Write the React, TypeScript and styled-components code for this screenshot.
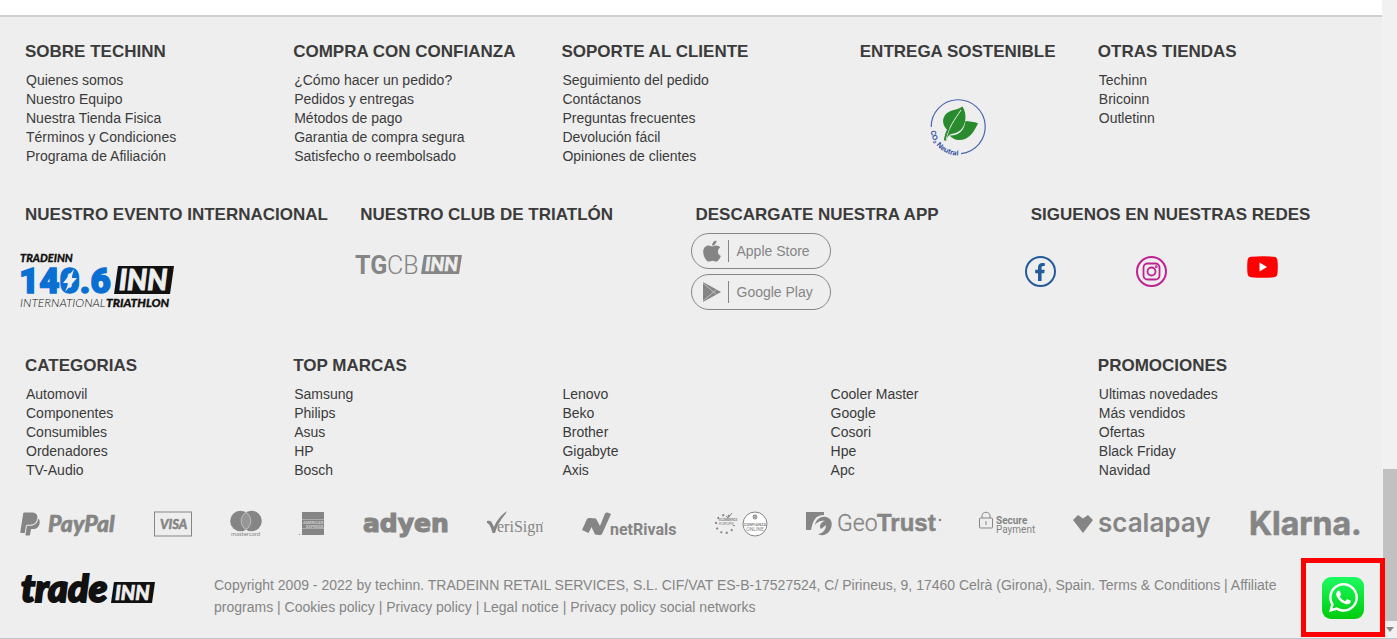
import React from 'react';
import styled, { createGlobalStyle } from 'styled-components';
import { FaApple, FaFacebookF, FaPaypal, FaWhatsapp } from 'react-icons/fa';

const GlobalStyle = createGlobalStyle`
  * { box-sizing: border-box; }
  body {
    margin: 0;
    background: #fff;
    font-family: "Liberation Sans", Arial, sans-serif;
    color: #3b3b3b;
  }
  a { color: inherit; text-decoration: none; }
  ul { list-style: none; margin: 0; padding: 0; }
  svg { display: block; overflow: visible; }
`;

const GRAY = '#858585';

const Shell = styled.div`
  display: flex;
  min-height: 100vh;
  border-bottom: 1px solid #c4c4c8;
`;

const Page = styled.main`
  display: flex;
  flex-direction: column;
  flex: 1;
  min-width: 0;
  padding-top: 15px;
`;

const ScrollTrack = styled.div`
  display: flex;
  flex-direction: column;
  justify-content: flex-end;
  align-items: center;
  width: 15px;
  background: #f1f1f1;
`;

const ScrollThumb = styled.div`
  width: 14px;
  height: 152px;
  background: #c1c1c1;
`;

const ScrollArrow = styled.div`
  margin: 6px 0;
  border: 4px solid transparent;
  border-top: 5px solid #8a8a8a;
  border-bottom: 0;
`;

const Footer = styled.footer`
  flex: 1;
  border-top: 2px solid #cfcfcf;
  background: #eee;
  padding: 25px 0 20px;
`;

const Row = styled.div<{ $columns: number; $gap: number }>`
  display: grid;
  grid-template-columns: repeat(${(p) => p.$columns}, minmax(0, 1fr));
  padding: 0 16px 0 25px;
  margin-bottom: ${(p) => p.$gap}px;
`;

const Column = styled.section<{ $centered?: boolean }>`
  ${(p) =>
    p.$centered &&
    `display: flex; flex-direction: column; align-items: center; padding-right: 12px;`}
`;

const Heading = styled.h2`
  margin: 0;
  height: 20px;
  font-size: 17px;
  line-height: 20px;
  font-weight: 700;
  white-space: nowrap;
`;

const LinkList = styled.ul`
  padding: 9px 0 0 1px;
  font-size: 14px;
  line-height: 19px;
`;

const NeutralBadge = styled.div`
  padding-top: 35px;
`;

const BrandLink = styled.a`
  display: block;
  width: fit-content;
  padding-top: 27px;
  margin-left: -5px;
`;

const Stores = styled.div`
  display: flex;
  flex-direction: column;
  gap: 5px;
  width: 140px;
  padding-top: 8px;
  margin-left: -5px;
`;

const StoreLink = styled.a`
  display: flex;
  align-items: center;
  height: 36px;
  padding-left: 8px;
  border: 1px solid ${GRAY};
  border-radius: 18px;
  font-size: 14px;
  color: ${GRAY};
  white-space: nowrap;
`;

const StoreIcon = styled.span`
  display: flex;
  justify-content: center;
  width: 24px;
`;

const StoreLabel = styled.span`
  margin-left: 4px;
  padding-left: 8px;
  border-left: 1px solid ${GRAY};
  line-height: 22px;
`;

const Socials = styled.nav`
  display: flex;
  gap: 80px;
  padding-top: 31px;
  margin-left: -6px;
`;

const SocialLink = styled.a<{ $color: string; $ring?: boolean }>`
  display: flex;
  align-items: center;
  justify-content: center;
  width: 31px;
  height: ${(p) => (p.$ring ? 31 : 22)}px;
  border: ${(p) => (p.$ring ? `2px solid ${p.$color}` : '0')};
  border-radius: ${(p) => (p.$ring ? '50%' : '0')};
  color: ${(p) => p.$color};
`;

const Partners = styled.div`
  display: flex;
  justify-content: space-between;
  padding: 0 23px 0 20px;
  margin: 0 0 24px;
`;

const Legal = styled.div`
  display: grid;
  grid-template-columns: 189px minmax(0, 1fr);
  padding: 0 60px 0 25px;
`;

const HomeLink = styled.a`
  margin: -4px 0 0 -5px;
`;

const Copyright = styled.p`
  margin: 0;
  font-size: 14px;
  line-height: 22px;
  color: #858585;
`;

const ChatFrame = styled.aside`
  position: fixed;
  right: 12px;
  bottom: 2px;
  display: flex;
  align-items: center;
  justify-content: center;
  width: 84px;
  height: 79px;
  border: 5px solid #f00;
`;

const ChatButton = styled.button`
  display: flex;
  align-items: center;
  justify-content: center;
  width: 42px;
  height: 42px;
  padding: 0;
  border: 0;
  border-radius: 9px;
  background: linear-gradient(#1cfb62, #00cb0c);
  color: #fff;
`;

const about: [string, string[]][] = [
  ['SOBRE TECHINN', ['Quienes somos', 'Nuestro Equipo', 'Nuestra Tienda Fisica', 'Términos y Condiciones', 'Programa de Afiliación']],
  ['COMPRA CON CONFIANZA', ['¿Cómo hacer un pedido?', 'Pedidos y entregas', 'Métodos de pago', 'Garantia de compra segura', 'Satisfecho o reembolsado']],
  ['SOPORTE AL CLIENTE', ['Seguimiento del pedido', 'Contáctanos', 'Preguntas frecuentes', 'Devolución fácil', 'Opiniones de clientes']],
];

const catalogue: [string, string[]][] = [
  ['CATEGORIAS', ['Automovil', 'Componentes', 'Consumibles', 'Ordenadores', 'TV-Audio']],
  ['TOP MARCAS', ['Samsung', 'Philips', 'Asus', 'HP', 'Bosch']],
  ['', ['Lenovo', 'Beko', 'Brother', 'Gigabyte', 'Axis']],
  ['', ['Cooler Master', 'Google', 'Cosori', 'Hpe', 'Apc']],
  ['PROMOCIONES', ['Ultimas novedades', 'Más vendidos', 'Ofertas', 'Black Friday', 'Navidad']],
];

function LinkColumn({ title, links }: { title: string; links: string[] }) {
  return (
    <Column>
      {title ? <Heading>{title}</Heading> : <Heading as="div" />}
      <LinkList>
        {links.map((label) => (
          <li key={label}>
            <a href="#">{label}</a>
          </li>
        ))}
      </LinkList>
    </Column>
  );
}

const lato = 'Lato, sans-serif';
const roboto = 'Roboto, sans-serif';
const inter = 'Inter, sans-serif';

function Co2Badge() {
  return (
    <svg width="60" height="60" viewBox="0 0 60 60" role="img" aria-label="CO2 Neutral">
      <path d="M3.2 30 A27 27 0 1 1 33 56.6" fill="none" stroke="#4a67ae" strokeWidth="1.2" />
      <path d="M34.5 9.5 C40 18 38 33 27.5 36 C23 37 19 38 18.5 43.5 L16.5 43 C17 39 18 36 19.500 33 C12 26 15 17 22.500 14 C27 12.500 31 12 34.500 9.500Z" fill="#2a8a2e" />
      <path d="M18 43 C20 31 27 22 33 13" fill="none" stroke="#eee" strokeWidth="1" />
      <path d="M16.800 43.500 C17.500 38 19 34 21 31" fill="none" stroke="#2a8a2e" strokeWidth="1.800" />
      <path d="M37.500 24 C41 24 46 25 50 26.200 C46 35 41 43 31 43 C27 43 24 41 21.500 38.500 C31 39 36.500 33 37.500 24Z" fill="#2a8a2e" />
      <path id="co2-arc" d="M2.500 34 A28 28 0 0 0 40 56.800" fill="none" />
      <text fontFamily={inter} fontWeight="700" fontSize="7" fill="#3454a4">
        <textPath href="#co2-arc">CO₂ Neutral</textPath>
      </text>
    </svg>
  );
}

function TriathlonLogo() {
  return (
    <svg width="156" height="58" viewBox="0 0 156 58" role="img" aria-label="Tradeinn 140.6 INN International Triathlon">
      <text x="0" y="10" fontFamily={lato} fontWeight="900" fontStyle="italic" fontSize="11" fill="#111" stroke="#111" strokeWidth="0.300">TRADEINN</text>
      <text x="-1" y="41" fontFamily={roboto} fontWeight="900" fontSize="35" fill="#0a6fd2" stroke="#0a6fd2" strokeWidth="1.500">140.6</text>
      <path d="M54 17 L43 31 H48.500 L45 40 L57 26 H51.500Z" fill="#eee" />
      <path d="M98 14 H154 L150 42 H94Z" fill="#111" />
      <text x="99" y="38" fontFamily={lato} fontWeight="900" fontStyle="italic" fontSize="28" fill="#eee" stroke="#eee">INN</text>
      <text x="0" y="55" fontFamily={lato} fontWeight="300" fontStyle="italic" fontSize="12" fill="#111">INTERNATIONAL</text>
      <text x="86" y="55" fontFamily={lato} fontWeight="900" fontStyle="italic" fontSize="12" fill="#111" stroke="#111" strokeWidth="0.300">TRIATHLON</text>
    </svg>
  );
}

function ClubLogo() {
  return (
    <svg width="108" height="26" viewBox="0 0 108 26" role="img" aria-label="TGCB INN">
      <g fontFamily={roboto} fontSize="25" fill={GRAY}>
        <text x="0" y="22" fontWeight="700">TG</text>
        <text x="32" y="22" fontWeight="300">CB</text>
      </g>
      <path d="M69 3 H107 L104 22 H66Z" fill={GRAY} />
      <text x="70" y="19" fontFamily={lato} fontWeight="900" fontStyle="italic" fontSize="19" fill="#eee" stroke="#eee" strokeWidth="0.700">INN</text>
    </svg>
  );
}

function PlayIcon() {
  return (
    <svg width="20" height="20" viewBox="0 0 20 20" aria-hidden="true">
      <path d="M1 0 L19 10 L1 20Z" fill={GRAY} />
      <path d="M1 1 L14.500 12.500 M1 19 L14.500 7.500" stroke="#ccc" strokeWidth="0.800" fill="none" />
    </svg>
  );
}

function InstagramIcon() {
  return (
    <svg width="19" height="19" viewBox="0 0 19 19" fill="none" stroke="currentColor" strokeWidth="1.8" aria-hidden="true">
      <rect x="1.500" y="1.500" width="16" height="16" rx="4" />
      <circle cx="9.500" cy="9.500" r="4" />
      <circle cx="14.300" cy="4.700" r="0.500" />
    </svg>
  );
}

function YoutubeIcon() {
  return (
    <svg width="31" height="22" viewBox="0 0 31 22" aria-hidden="true">
      <path d="M4 .8 Q15.500 -.4 27 .8 Q30 1 30.400 4 Q31.200 11 30.400 18 Q30 20.800 27 21.200 Q15.500 22.400 4 21.200 Q1 20.800 .6 18 Q-.2 11 .6 4 Q1 1 4 .8Z" fill="#f00" />
      <path d="M12.500 6.500 L20 11 L12.500 15.500Z" fill="#fff" />
    </svg>
  );
}

function TradeinnLogo() {
  return (
    <svg width="138" height="40" viewBox="0 0 138 40" role="img" aria-label="tradeINN">
      <text x="1" y="32" fontFamily={lato} fontWeight="900" fontStyle="italic" fontSize="38" fill="#111" stroke="#111" strokeWidth="2">trade</text>
      <path d="M94 12 H135 L132 33 H91Z" fill="#111" />
      <text x="95" y="30" fontFamily={lato} fontWeight="900" fontStyle="italic" fontSize="20" fill="#eee" stroke="#eee" strokeWidth="0.700">INN</text>
    </svg>
  );
}

function PartnerLogo({ name, width, children }: { name: string; width: number; children: React.ReactNode }) {
  return (
    <svg width={width} height="50" viewBox={`0 0 ${width} 50`} fill={GRAY} role="img" aria-label={name}>
      {children}
    </svg>
  );
}

function PartnerLogos() {
  return (
    <Partners>
      <PartnerLogo name="PayPal" width={96}>
        <FaPaypal x="-3" y="11" size={26} color={GRAY} />
        <text x="28" y="32" fontFamily={lato} fontWeight="900" fontStyle="italic" fontSize="23" stroke={GRAY} strokeWidth="0.600">PayPal</text>
      </PartnerLogo>
      <PartnerLogo name="Visa" width={38}>
        <rect x="0.500" y="12" width="37" height="24" fill="none" stroke={GRAY} />
        <text x="6" y="29" fontFamily={lato} fontWeight="900" fontStyle="italic" fontSize="13" stroke={GRAY} strokeWidth="0.400">VISA</text>
      </PartnerLogo>
      <PartnerLogo name="Mastercard" width={32}>
        <circle cx="10.500" cy="21" r="10.300" />
        <circle cx="21.500" cy="21" r="10.300" />
        <path d="M16 12.300 A10.300 10.300 0 0 1 16 29.700 A10.300 10.300 0 0 1 16 12.300Z" fill="#969696" stroke="#ddd" strokeWidth="0.600" />
        <text x="1" y="36" fontFamily={lato} fontWeight="400" fontSize="6">mastercard</text>
      </PartnerLogo>
      <PartnerLogo name="American Express" width={26}>
        <rect x="3" y="12" width="22" height="23" />
        <path d="M3 19.500 H25 M3 28.500 H25" stroke="#bbb" strokeWidth="0.700" />
        <text x="4" y="24" fontFamily={roboto} fontWeight="700" fontSize="4" fill="#ccc">AMERICAN</text>
        <text x="7" y="28" fontFamily={roboto} fontWeight="700" fontSize="4" fill="#ccc">EXPRESS</text>
        <circle cx="0.600" cy="34.500" r="0.600" />
      </PartnerLogo>
      <PartnerLogo name="Adyen" width={86}>
        <text x="0" y="32" fontFamily='"DejaVu Sans", sans-serif' fontWeight="700" fontSize="25" stroke={GRAY} strokeWidth="1.200">adyen</text>
      </PartnerLogo>
      <PartnerLogo name="VeriSign" width={57}>
        <path d="M0 21 C3 20 4.500 21 5.500 24 L7 27 C10 20 14 15 20 11 L18.500 14 C13 20 10 26 8 33 H5.500 C4.500 29 3 24 0 23Z" />
        <text x="10" y="32" fontFamily='"Liberation Serif", serif' fontSize="16">eriSign</text>
        <circle cx="55.500" cy="23" r="0.700" />
      </PartnerLogo>
      <PartnerLogo name="netRivals" width={94}>
        <path d="M0 30 L5 19 Q6 17.500 8 18 L14 18.500 L18 26 L23 13.500 Q24 12 25.500 12.500 L29 14 L20 34 Q19 35.500 17 35 L13 34.500 L9.500 27 L6.500 33Z" />
        <text x="28" y="35" fontFamily={roboto} fontWeight="700" fontSize="16">netRivals</text>
      </PartnerLogo>
      <PartnerLogo name="Ecommerce Europe, Confianza Online" width={54}>
        <circle cx="11" cy="24" r="9" fill="none" stroke={GRAY} strokeWidth="2" strokeDasharray="2 3.650" pathLength="56.500" />
        <rect x="5" y="17" width="20" height="8" fill="#eee" />
        <text x="5" y="21" fontFamily={roboto} fontWeight="700" fontSize="3">ECOMMERCE</text>
        <text x="5" y="25" fontFamily={roboto} fontSize="4">EUROPE</text>
        <path d="M12 16 L14 18 L18 13" fill="none" stroke={GRAY} />
        <circle cx="41" cy="24" r="12" fill="#fff" stroke={GRAY} />
        <circle cx="41" cy="17" r="2.400" />
        <path d="M39 17 L42.500 15.500 M40 18.500 L43 17" stroke="#fff" strokeWidth="0.500" />
        <text x="41" y="26" textAnchor="middle" fontFamily={roboto} fontWeight="700" fontSize="4">CONFIANZA</text>
        <text x="41" y="31" textAnchor="middle" fontFamily={roboto} fontSize="5">ONLINE</text>
      </PartnerLogo>
      <PartnerLogo name="GeoTrust" width={136}>
        <path d="M0 12 H18 V15 C10 15 7 20 5 30 H0Z" />
        <path d="M9 25 C10 19 15 16 20 17 C25 18 27 23 25 28 C23 34 17 37 12 34 C15 34 20 31 20 25 L15 29 C13 27 14 22 19 21 C15 20 11 22 9 25Z" />
        <text x="31" y="31" fontFamily={roboto} fontWeight="300" fontSize="23" stroke={GRAY} strokeWidth="0.300">Geo</text>
        <text x="71" y="31" fontWeight="700" fontSize="24" stroke={GRAY} strokeWidth="0.500">Trust</text>
        <circle cx="134" cy="20" r="1.300" />
      </PartnerLogo>
      <PartnerLogo name="Secure Payment" width={56}>
        <rect x="0.500" y="18" width="13" height="10" rx="1" fill="none" stroke={GRAY} />
        <path d="M3 18 V16 C3 11 11 11 11 16 V18 M7 21 V25" fill="none" stroke={GRAY} />
        <text x="17" y="24" fontFamily={roboto} fontWeight="700" fontSize="10">Secure</text>
        <text x="17" y="33" fontFamily={roboto} fontSize="10">Payment</text>
      </PartnerLogo>
      <PartnerLogo name="scalapay" width={139}>
        <path d="M0 20 L5 15 L10 18.500 L15 15 L20 20 L10 33Z" />
        <text x="25" y="32" fontFamily={inter} fontWeight="600" fontSize="26">scalapay</text>
      </PartnerLogo>
      <PartnerLogo name="Klarna" width={109}>
        <text x="-1" y="35" fontFamily={inter} fontWeight="700" fontSize="32" stroke={GRAY} strokeWidth="0.600">Klarna.</text>
      </PartnerLogo>
    </Partners>
  );
}

const legalLinks = [
  'Terms & Conditions',
  'Affiliate programs',
  'Cookies policy',
  'Privacy policy',
  'Legal notice',
  'Privacy policy social networks',
];

export default function App() {
  return (
    <>
      <GlobalStyle />
      <Shell>
        <Page>
          <Footer>
            <Row $columns={5} $gap={39}>
              {about.map(([title, links]) => (
                <LinkColumn key={title} title={title} links={links} />
              ))}
              <Column $centered>
                <Heading>ENTREGA SOSTENIBLE</Heading>
                <NeutralBadge>
                  <Co2Badge />
                </NeutralBadge>
              </Column>
              <LinkColumn title="OTRAS TIENDAS" links={['Techinn', 'Bricoinn', 'Outletinn']} />
            </Row>

            <Row $columns={4} $gap={46}>
              <Column>
                <Heading>NUESTRO EVENTO INTERNACIONAL</Heading>
                <BrandLink href="#">
                  <TriathlonLogo />
                </BrandLink>
              </Column>
              <Column>
                <Heading>NUESTRO CLUB DE TRIATLÓN</Heading>
                <BrandLink href="#">
                  <ClubLogo />
                </BrandLink>
              </Column>
              <Column>
                <Heading>DESCARGATE NUESTRA APP</Heading>
                <Stores>
                  <StoreLink href="#">
                    <StoreIcon>
                      <FaApple size={24} />
                    </StoreIcon>
                    <StoreLabel>Apple Store</StoreLabel>
                  </StoreLink>
                  <StoreLink href="#">
                    <StoreIcon>
                      <PlayIcon />
                    </StoreIcon>
                    <StoreLabel>Google Play</StoreLabel>
                  </StoreLink>
                </Stores>
              </Column>
              <Column>
                <Heading>SIGUENOS EN NUESTRAS REDES</Heading>
                <Socials>
                  <SocialLink href="#" $color="#235a9c" $ring aria-label="Facebook">
                    <FaFacebookF size={18} />
                  </SocialLink>
                  <SocialLink href="#" $color="#be2393" $ring aria-label="Instagram">
                    <InstagramIcon />
                  </SocialLink>
                  <SocialLink href="#" $color="#f00" aria-label="YouTube">
                    <YoutubeIcon />
                  </SocialLink>
                </Socials>
              </Column>
            </Row>

            <Row $columns={5} $gap={20}>
              {catalogue.map(([title, links]) => (
                <LinkColumn key={links[0]} title={title} links={links} />
              ))}
            </Row>

            <PartnerLogos />

            <Legal>
              <HomeLink href="#">
                <TradeinnLogo />
              </HomeLink>
              <Copyright>
                Copyright 2009 - 2022 by techinn. TRADEINN RETAIL SERVICES, S.L. CIF/VAT ES-B-17527524, C/ Pirineus, 9,
                17460 Celrà (Girona), Spain.{' '}
                {legalLinks.map((label, i) => (
                  <React.Fragment key={label}>
                    {i > 0 && ' | '}
                    <a href="#">{label}</a>
                  </React.Fragment>
                ))}
              </Copyright>
            </Legal>
          </Footer>
        </Page>
        <ScrollTrack aria-hidden="true">
          <ScrollThumb />
          <ScrollArrow />
        </ScrollTrack>
      </Shell>
      <ChatFrame>
        <ChatButton type="button" aria-label="WhatsApp">
          <FaWhatsapp size={33} />
        </ChatButton>
      </ChatFrame>
    </>
  );
}
